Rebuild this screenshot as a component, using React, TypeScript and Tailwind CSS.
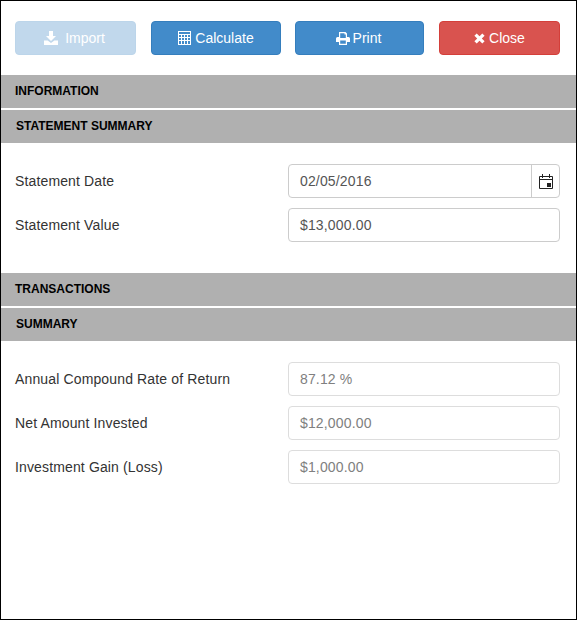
import type { ReactNode } from 'react';

function DownloadIcon() {
  return (
    <svg viewBox="0 0 14 14" className="h-[14px] w-[14px]" fill="currentColor">
      <path d="M5 0h4v5h3L7 10 2 5h3z" />
      <path d="M0 9.500h3.600L7 12l3.400-2.500H14V14H0z" />
    </svg>
  );
}

function CalculatorIcon() {
  return (
    <svg viewBox="0 0 13 14" className="h-[14px] w-[13px]" fill="currentColor">
      <path
        fillRule="evenodd"
        d="M0 0h13v14H0zM1 1v2h11V1zM1 4v2h2V4zM4 4v2h2V4zM7 4v2h2V4zM10 4v2h2V4zM1 7v2h2V7zM4 7v2h2V7zM7 7v2h2V7zM10 7v2h2V7zM1 10v3h2v-3zM4 10v3h2v-3zM7 10v3h2v-3zM10 10v3h2v-3z"
      />
    </svg>
  );
}

function PrintIcon() {
  return (
    <svg viewBox="0 0 14 13" className="h-[13px] w-[14px]" fill="currentColor">
      <path
        fillRule="evenodd"
        d="M3 0h6.500L11 1.500V5h1.500A1.500 1.500 0 0 1 14 6.500V10h-3v3H3v-3H0V6.500A1.500 1.500 0 0 1 1.500 5H3zM4.200 1.200V6h5.600V2.500H8.500V1.200zM4.200 8.500v3.300h5.600V8.500z"
      />
    </svg>
  );
}

function CloseIcon() {
  return (
    <svg viewBox="0 0 11 11" className="h-[11px] w-[11px]" fill="currentColor">
      <path d="M2.700.4 5.500 3.200 8.300.4l2.300 2.300-2.800 2.800 2.800 2.800-2.300 2.300-2.800-2.800-2.800 2.800L.4 8.300l2.800-2.800L.4 2.700z" />
    </svg>
  );
}

function CalendarIcon() {
  return (
    <svg viewBox="0 0 14 15" className="h-[15px] w-[14px] text-[#222]" fill="none" stroke="currentColor">
      <path d="M.5 2.500h13v12H.5zM.5 5.500h13" />
      <path d="M3.500 0v4M10.500 0v4" />
      <path d="M8 9h4v4H8z" fill="currentColor" stroke="none" />
    </svg>
  );
}

function ActionButton({ width, className, icon, gap, children }: {
  width: string;
  className: string;
  icon: ReactNode;
  gap: string;
  children: ReactNode;
}) {
  return (
    <button type="button" className={`flex h-[34px] items-center justify-center rounded border text-sm text-white ${width} ${gap} ${className}`}>
      {icon}
      {children}
    </button>
  );
}

function SectionBar({ title, inset }: { title: string; inset?: boolean }) {
  return (
    <div className={`flex h-[33px] items-center bg-[#b0b0b0] pb-[2px] text-xs font-bold text-black ${inset ? 'pl-[15px]' : 'pl-[14px]'}`}>
      {title}
    </div>
  );
}

function Field({ label, value, disabled }: { label: string; value: string; disabled?: boolean }) {
  return (
    <div className="flex h-[34px] items-center justify-between pl-[14px] pr-4">
      <span className="text-sm tracking-[0.14px] text-[#333]">{label}</span>
      <div className={`flex h-[34px] w-[272px] items-center rounded border px-[11px] text-sm tracking-[0.15px] ${disabled ? 'border-[#ddd] text-[#808080]' : 'border-[#ccc] text-[#555]'}`}>
        {value}
      </div>
    </div>
  );
}

export default function App() {
  return (
    <div className="h-[620px] w-[577px] border border-black bg-white font-['Liberation_Sans',Arial,sans-serif]">
      <div className="flex pl-[14px] pt-5">
        <ActionButton width="w-[121px] pr-[2px]" gap="gap-[7px]" className="border-[#bcd5ea] bg-[#c1d8ec]" icon={<DownloadIcon />}>
          Import
        </ActionButton>
        <ActionButton width="ml-[15px] w-[130px]" gap="gap-[4px]" className="border-[#357ebd] bg-[#428bca]" icon={<CalculatorIcon />}>
          Calculate
        </ActionButton>
        <ActionButton width="ml-[14px] w-[129px] pr-[2px]" gap="gap-[3px]" className="border-[#357ebd] bg-[#428bca]" icon={<PrintIcon />}>
          Print
        </ActionButton>
        <ActionButton width="ml-[15px] w-[121px]" gap="gap-[4px]" className="border-[#d43f3a] bg-[#d9534f]" icon={<CloseIcon />}>
          Close
        </ActionButton>
      </div>

      <div className="mt-5 flex flex-col gap-[2px]">
        <SectionBar title="INFORMATION" />
        <SectionBar title="STATEMENT SUMMARY" inset />
      </div>

      <div className="flex flex-col gap-[10px] pt-[21px]">
        <div className="flex h-[34px] items-center justify-between pl-[14px] pr-4">
          <span className="text-sm tracking-[0.14px] text-[#333]">Statement Date</span>
          <div className="flex h-[34px] w-[272px] items-center rounded border border-[#ccc] text-sm tracking-[0.15px] text-[#555]">
            <span className="flex-1 px-[11px]">02/05/2016</span>
            <span className="flex h-full w-[28px] items-center justify-center border-l border-[#ccc]">
              <CalendarIcon />
            </span>
          </div>
        </div>
        <Field label="Statement Value" value="$13,000.00" />
      </div>

      <div className="mt-[31px] flex flex-col gap-[2px]">
        <SectionBar title="TRANSACTIONS" />
        <SectionBar title="SUMMARY" inset />
      </div>

      <div className="flex flex-col gap-[10px] pt-[21px]">
        <Field label="Annual Compound Rate of Return" value="87.12 %" disabled />
        <Field label="Net Amount Invested" value="$12,000.00" disabled />
        <Field label="Investment Gain (Loss)" value="$1,000.00" disabled />
      </div>
    </div>
  );
}
